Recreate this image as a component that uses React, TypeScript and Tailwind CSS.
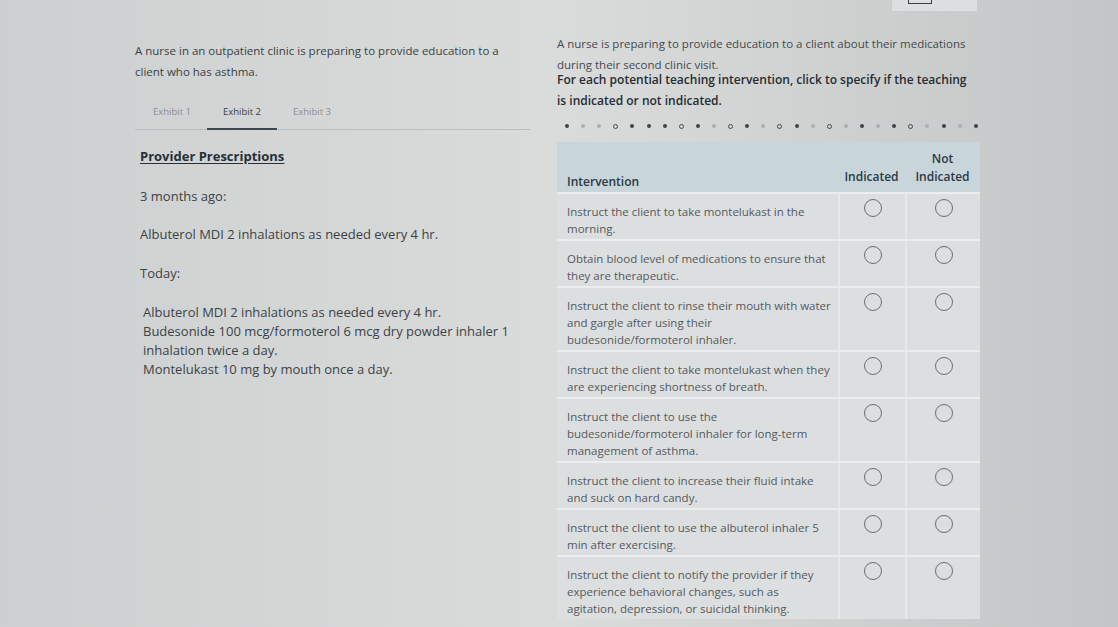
import React from 'react';

const font = { fontFamily: '"Open Sans", "Noto Sans", sans-serif' };

const rows: string[][] = [
  ['Instruct the client to take montelukast in the', 'morning.'],
  ['Obtain blood level of medications to ensure that', 'they are therapeutic.'],
  ['Instruct the client to rinse their mouth with water', 'and gargle after using their', 'budesonide/formoterol inhaler.'],
  ['Instruct the client to take montelukast when they', 'are experiencing shortness of breath.'],
  ['Instruct the client to use the', 'budesonide/formoterol inhaler for long-term', 'management of asthma.'],
  ['Instruct the client to increase their fluid intake', 'and suck on hard candy.'],
  ['Instruct the client to use the albuterol inhaler 5', 'min after exercising.'],
  ['Instruct the client to notify the provider if they', 'experience behavioral changes, such as', 'agitation, depression, or suicidal thinking.'],
];

// f = filled, l = light, o = hollow
const dots = 'fllofffoflofloflolflfolflf'.split('');

function Radio() {
  return <span className="block h-[18px] w-[18px] rounded-full border-[1.5px] border-[#6a6e70] bg-transparent" />;
}

function Dot({ kind }: { kind: string }) {
  if (kind === 'o') {
    return <span className="block h-[5px] w-[5px] rounded-full border border-[#444a4e]" />;
  }
  if (kind === 'l') {
    return <span className="block h-[4px] w-[4px] rounded-full bg-[#a9b0b3]" />;
  }
  return <span className="block h-[4px] w-[4px] rounded-full bg-[#3d4448]" />;
}

export default function App() {
  return (
    <div
      style={font}
      className="relative h-[627px] w-full overflow-hidden bg-gradient-to-r from-[#cdd0d0] via-[#dadcdc] to-[#c3c6c6]"
    >
      {/* top toolbar stub */}
      <div className="flex justify-end pr-[140px]">
        <div className="flex h-[12px] w-[87px] justify-start border border-t-0 border-[#c9cccc] bg-[#dcdfdf] pl-[16px]">
          <span className="block h-[4px] w-[24px] border-b border-l border-r border-[#3a3f42]" />
        </div>
      </div>

      <div className="flex">
        {/* left column */}
        <div className="ml-[135px] w-[395px]">
          <p className="mt-[28px] text-[11.5px] leading-[21px] text-[#3a3f42]">
            A nurse in an outpatient clinic is preparing to provide education to a
            <br />
            client who has asthma.
          </p>

          <div className="relative mt-[17px] flex border-b border-[#b9bdbe] pl-[2px]">
            <div className="w-[70px] pb-[10px] pt-[6px] text-center text-[9.5px] leading-[14px] text-[#8a8f92]">Exhibit 1</div>
            <div className="relative w-[70px] pb-[10px] pt-[6px] text-center text-[9.5px] leading-[14px] text-[#3a3f42]">
              Exhibit 2
              <span className="absolute bottom-[-1px] left-0 right-0 h-[2px] bg-[#3b4850]" />
            </div>
            <div className="w-[70px] pb-[10px] pt-[6px] text-center text-[9.5px] leading-[14px] text-[#8a8f92]">Exhibit 3</div>
          </div>

          <div className="pl-[5px]">
            <div className="mt-[16px] text-[13px] font-bold leading-[20px] text-[#263036] underline underline-offset-2">
              Provider Prescriptions
            </div>
            <div className="mt-[21px] text-[13px] leading-[19px] text-[#3c4245]">3 months ago:</div>
            <div className="mt-[19px] text-[13px] leading-[19px] text-[#3c4245]">Albuterol MDI 2 inhalations as needed every 4 hr.</div>
            <div className="mt-[20px] text-[13px] leading-[19px] text-[#3c4245]">Today:</div>
            <div className="mt-[20px] pl-[3px] text-[13px] leading-[19px] text-[#3c4245]">
              <div>Albuterol MDI 2 inhalations as needed every 4 hr.</div>
              <div>Budesonide 100 mcg/formoterol 6 mcg dry powder inhaler 1</div>
              <div>inhalation twice a day.</div>
              <div>Montelukast 10 mg by mouth once a day.</div>
            </div>
          </div>
        </div>

        {/* right column */}
        <div className="ml-[27px] w-[423px]">
          <p className="mt-[21px] text-[11.5px] leading-[21px] text-[#44494c]">
            A nurse is preparing to provide education to a client about their medications
            <br />
            during their second clinic visit.
          </p>
          <p className="mt-[-6px] text-[12px] font-semibold leading-[21px] text-[#262c30]">
            For each potential teaching intervention, click to specify if the teaching
            <br />
            is indicated or not indicated.
          </p>

          <div className="mt-[10px] flex h-[10px] items-center justify-between pl-[8px] pr-[2px]">
            {dots.map((d, i) => (
              <Dot key={i} kind={d} />
            ))}
          </div>

          <div className="mt-[11px] bg-[#e9ecec]">
            <div className="flex h-[50px] bg-[#c8d5db] text-[12px] font-semibold leading-[18px] text-[#2b3a42]">
              <div className="flex w-[281px] items-end pb-[1px] pl-[10px]">Intervention</div>
              <div className="flex w-[67px] items-end justify-center pb-[6px]">Indicated</div>
              <div className="flex w-[75px] flex-col items-center justify-end pb-[6px]">
                <span>Not</span>
                <span>Indicated</span>
              </div>
            </div>
            {rows.map((lines, i) => (
              <div key={i} className="flex border-t-2 border-[#eceeee]">
                <div className="w-[281px] bg-[#dcdfe0] pb-[2px] pl-[10px] pt-[9px] text-[11.5px] leading-[17px] text-[#55595c]">
                  {lines.map((l, j) => (
                    <div key={j}>{l}</div>
                  ))}
                </div>
                <div className="flex w-[67px] justify-center border-l-2 border-[#e6e9e9] bg-[#dcdfe0] pt-[5px]">
                  <Radio />
                </div>
                <div className="flex w-[75px] justify-center border-l-2 border-[#e6e9e9] bg-[#dcdfe0] pt-[5px]">
                  <Radio />
                </div>
              </div>
            ))}
          </div>
        </div>
      </div>
    </div>
  );
}
